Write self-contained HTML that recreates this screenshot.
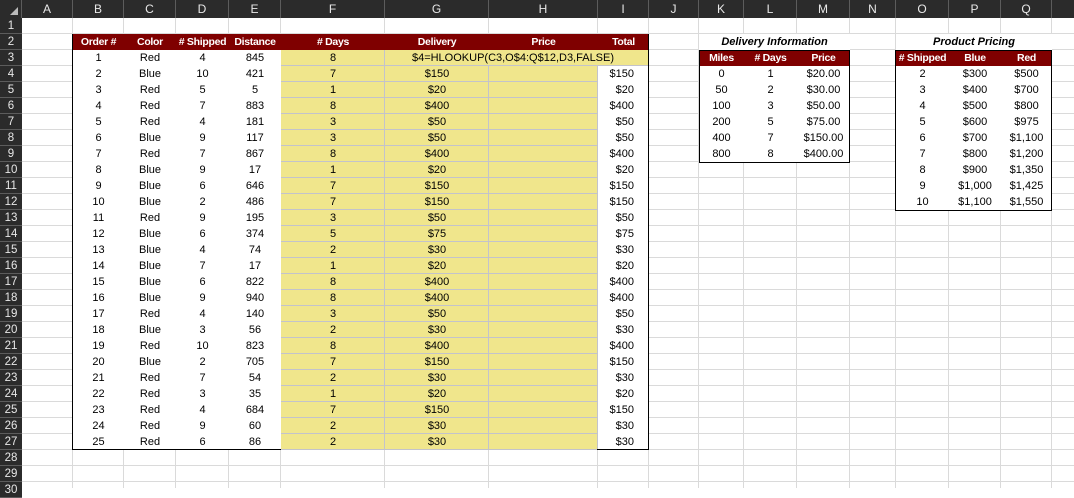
<!DOCTYPE html>
<html><head><meta charset="utf-8"><style>
*{box-sizing:border-box;margin:0;padding:0}
body{width:1074px;height:488px;overflow:hidden;background:#fff;position:relative;font-family:"Liberation Sans",sans-serif;font-size:11px;color:#000}
.grid{position:absolute;left:22px;top:18px;width:1052px;height:470px;background:repeating-linear-gradient(to bottom,transparent 0,transparent 15px,#dadada 15px,#dadada 16px)}
.vl{position:absolute;top:18px;height:470px;width:1px;background:#dadada}
.ch{position:absolute;left:0;top:0;width:1074px;height:18px;background:#2b2b2b;display:flex}
.ch div{height:18px;border-right:1px solid #5c5c5c;color:#e8e8e8;font-size:12px;text-align:center;line-height:18px;flex:none}
.rh{position:absolute;left:0;top:18px;width:22px;background:#2b2b2b}
.rh div{height:16px;border-bottom:1px solid #5c5c5c;color:#e8e8e8;font-size:11.5px;text-align:center;line-height:16px}
table{position:absolute;border-collapse:collapse;table-layout:fixed}
td{height:16px;padding:0;text-align:center;line-height:16px;white-space:nowrap;background:#fff}
tr.h td{background:#7f0000;color:#fff;font-weight:bold;font-size:10.5px;letter-spacing:-0.3px}
td.y{background:#f0e68c;box-shadow:inset -1px -1px 0 #c3c3cb}
td.yl{background:#f0e68c;box-shadow:inset 0 -1px 0 #c3c3cb}
td.r{text-align:right;padding-right:15px}
.t{font-weight:bold;font-style:italic;background:#fff}
.ob{position:absolute;border:1px solid #000}
.bl{position:absolute;height:1px;background:#000}
</style></head><body>
<div class="grid"></div>
<div class="vl" style="left:72px"></div><div class="vl" style="left:123px"></div><div class="vl" style="left:175px"></div><div class="vl" style="left:228px"></div><div class="vl" style="left:280px"></div><div class="vl" style="left:384px"></div><div class="vl" style="left:488px"></div><div class="vl" style="left:597px"></div><div class="vl" style="left:648px"></div><div class="vl" style="left:698px"></div><div class="vl" style="left:743px"></div><div class="vl" style="left:796px"></div><div class="vl" style="left:849px"></div><div class="vl" style="left:895px"></div><div class="vl" style="left:948px"></div><div class="vl" style="left:1000px"></div><div class="vl" style="left:1051px"></div>
<div class="ch">
<div style="width:22px;position:relative"><span style="position:absolute;right:3px;bottom:3px;width:0;height:0;border-left:8px solid transparent;border-bottom:8px solid #bbb"></span></div>
<div style="width:51px">A</div><div style="width:51px">B</div><div style="width:52px">C</div><div style="width:53px">D</div><div style="width:52px">E</div><div style="width:104px">F</div><div style="width:104px">G</div><div style="width:109px">H</div><div style="width:51px">I</div><div style="width:50px">J</div><div style="width:45px">K</div><div style="width:53px">L</div><div style="width:53px">M</div><div style="width:46px">N</div><div style="width:53px">O</div><div style="width:52px">P</div><div style="width:51px">Q</div><div style="width:22px;border:none"></div>
</div>
<div class="rh"><div>1</div><div>2</div><div>3</div><div>4</div><div>5</div><div>6</div><div>7</div><div>8</div><div>9</div><div>10</div><div>11</div><div>12</div><div>13</div><div>14</div><div>15</div><div>16</div><div>17</div><div>18</div><div>19</div><div>20</div><div>21</div><div>22</div><div>23</div><div>24</div><div>25</div><div>26</div><div>27</div><div>28</div><div>29</div><div>30</div></div>

<table style="left:73px;top:34px;width:576px">
<col style="width:51px"><col style="width:52px"><col style="width:53px"><col style="width:52px"><col style="width:104px"><col style="width:104px"><col style="width:109px"><col style="width:51px">
<tr class="h"><td>Order #</td><td>Color</td><td># Shipped</td><td>Distance</td><td># Days</td><td>Delivery</td><td>Price</td><td>Total</td></tr>
<tr><td>1</td><td>Red</td><td>4</td><td>845</td><td class="y">8</td><td class="yl" colspan="3" style="padding-right:8px">$4=HLOOKUP(C3,O$4:Q$12,D3,FALSE)</td></tr>
<tr><td>2</td><td>Blue</td><td>10</td><td>421</td><td class="y">7</td><td class="y">$150</td><td class="y"></td><td class="r">$150</td></tr>
<tr><td>3</td><td>Red</td><td>5</td><td>5</td><td class="y">1</td><td class="y">$20</td><td class="y"></td><td class="r">$20</td></tr>
<tr><td>4</td><td>Red</td><td>7</td><td>883</td><td class="y">8</td><td class="y">$400</td><td class="y"></td><td class="r">$400</td></tr>
<tr><td>5</td><td>Red</td><td>4</td><td>181</td><td class="y">3</td><td class="y">$50</td><td class="y"></td><td class="r">$50</td></tr>
<tr><td>6</td><td>Blue</td><td>9</td><td>117</td><td class="y">3</td><td class="y">$50</td><td class="y"></td><td class="r">$50</td></tr>
<tr><td>7</td><td>Red</td><td>7</td><td>867</td><td class="y">8</td><td class="y">$400</td><td class="y"></td><td class="r">$400</td></tr>
<tr><td>8</td><td>Blue</td><td>9</td><td>17</td><td class="y">1</td><td class="y">$20</td><td class="y"></td><td class="r">$20</td></tr>
<tr><td>9</td><td>Blue</td><td>6</td><td>646</td><td class="y">7</td><td class="y">$150</td><td class="y"></td><td class="r">$150</td></tr>
<tr><td>10</td><td>Blue</td><td>2</td><td>486</td><td class="y">7</td><td class="y">$150</td><td class="y"></td><td class="r">$150</td></tr>
<tr><td>11</td><td>Red</td><td>9</td><td>195</td><td class="y">3</td><td class="y">$50</td><td class="y"></td><td class="r">$50</td></tr>
<tr><td>12</td><td>Blue</td><td>6</td><td>374</td><td class="y">5</td><td class="y">$75</td><td class="y"></td><td class="r">$75</td></tr>
<tr><td>13</td><td>Blue</td><td>4</td><td>74</td><td class="y">2</td><td class="y">$30</td><td class="y"></td><td class="r">$30</td></tr>
<tr><td>14</td><td>Blue</td><td>7</td><td>17</td><td class="y">1</td><td class="y">$20</td><td class="y"></td><td class="r">$20</td></tr>
<tr><td>15</td><td>Blue</td><td>6</td><td>822</td><td class="y">8</td><td class="y">$400</td><td class="y"></td><td class="r">$400</td></tr>
<tr><td>16</td><td>Blue</td><td>9</td><td>940</td><td class="y">8</td><td class="y">$400</td><td class="y"></td><td class="r">$400</td></tr>
<tr><td>17</td><td>Red</td><td>4</td><td>140</td><td class="y">3</td><td class="y">$50</td><td class="y"></td><td class="r">$50</td></tr>
<tr><td>18</td><td>Blue</td><td>3</td><td>56</td><td class="y">2</td><td class="y">$30</td><td class="y"></td><td class="r">$30</td></tr>
<tr><td>19</td><td>Red</td><td>10</td><td>823</td><td class="y">8</td><td class="y">$400</td><td class="y"></td><td class="r">$400</td></tr>
<tr><td>20</td><td>Blue</td><td>2</td><td>705</td><td class="y">7</td><td class="y">$150</td><td class="y"></td><td class="r">$150</td></tr>
<tr><td>21</td><td>Red</td><td>7</td><td>54</td><td class="y">2</td><td class="y">$30</td><td class="y"></td><td class="r">$30</td></tr>
<tr><td>22</td><td>Red</td><td>3</td><td>35</td><td class="y">1</td><td class="y">$20</td><td class="y"></td><td class="r">$20</td></tr>
<tr><td>23</td><td>Red</td><td>4</td><td>684</td><td class="y">7</td><td class="y">$150</td><td class="y"></td><td class="r">$150</td></tr>
<tr><td>24</td><td>Red</td><td>9</td><td>60</td><td class="y">2</td><td class="y">$30</td><td class="y"></td><td class="r">$30</td></tr>
<tr><td>25</td><td>Red</td><td>6</td><td>86</td><td class="y">2</td><td class="y">$30</td><td class="y"></td><td class="r">$30</td></tr>
</table>
<div class="bl" style="left:72px;top:34px;width:1px;height:416px"></div>
<div class="bl" style="left:648px;top:34px;width:1px;height:416px"></div>
<div class="bl" style="left:72px;top:449px;width:209px"></div>
<div class="bl" style="left:597px;top:449px;width:52px"></div>

<table style="left:699px;top:34px;width:151px">
<col style="width:45px"><col style="width:53px"><col style="width:53px">
<tr><td colspan="3" class="t">Delivery Information</td></tr>
<tr class="h"><td>Miles</td><td># Days</td><td>Price</td></tr>
<tr><td>0</td><td>1</td><td>$20.00</td></tr>
<tr><td>50</td><td>2</td><td>$30.00</td></tr>
<tr><td>100</td><td>3</td><td>$50.00</td></tr>
<tr><td>200</td><td>5</td><td>$75.00</td></tr>
<tr><td>400</td><td>7</td><td>$150.00</td></tr>
<tr><td>800</td><td>8</td><td>$400.00</td></tr>
</table>
<div class="ob" style="left:699px;top:50px;width:151px;height:113px"></div>

<table style="left:896px;top:34px;width:156px">
<col style="width:53px"><col style="width:52px"><col style="width:51px">
<tr><td colspan="3" class="t">Product Pricing</td></tr>
<tr class="h"><td># Shipped</td><td>Blue</td><td>Red</td></tr>
<tr><td>2</td><td>$300</td><td>$500</td></tr>
<tr><td>3</td><td>$400</td><td>$700</td></tr>
<tr><td>4</td><td>$500</td><td>$800</td></tr>
<tr><td>5</td><td>$600</td><td>$975</td></tr>
<tr><td>6</td><td>$700</td><td>$1,100</td></tr>
<tr><td>7</td><td>$800</td><td>$1,200</td></tr>
<tr><td>8</td><td>$900</td><td>$1,350</td></tr>
<tr><td>9</td><td>$1,000</td><td>$1,425</td></tr>
<tr><td>10</td><td>$1,100</td><td>$1,550</td></tr>
</table>
<div class="ob" style="left:895px;top:50px;width:157px;height:161px"></div>
</body></html>
